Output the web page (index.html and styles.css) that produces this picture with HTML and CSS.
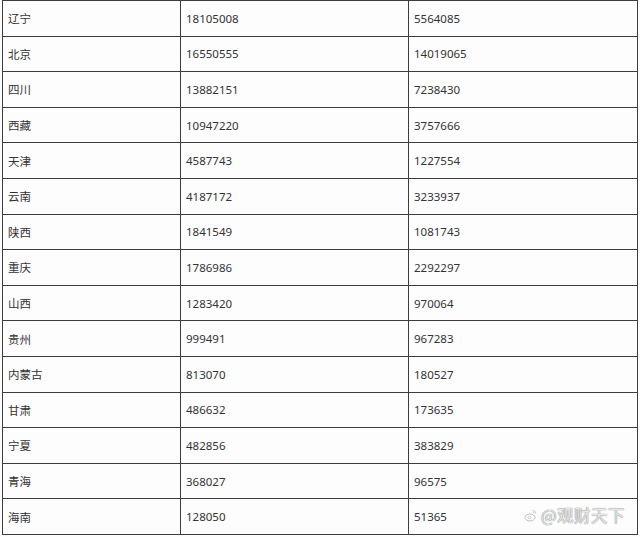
FILE: index.html
```html
<!DOCTYPE html>
<html lang="zh">
<head>
<meta charset="utf-8">
<link rel="stylesheet" href="styles.css">
</head>
<body>
<div class="page">
  <div class="grid">
    <div class="c">辽宁</div><div class="c">18105008</div><div class="c">5564085</div>
    <div class="c">北京</div><div class="c">16550555</div><div class="c">14019065</div>
    <div class="c">四川</div><div class="c">13882151</div><div class="c">7238430</div>
    <div class="c">西藏</div><div class="c">10947220</div><div class="c">3757666</div>
    <div class="c">天津</div><div class="c">4587743</div><div class="c">1227554</div>
    <div class="c">云南</div><div class="c">4187172</div><div class="c">3233937</div>
    <div class="c">陕西</div><div class="c">1841549</div><div class="c">1081743</div>
    <div class="c">重庆</div><div class="c">1786986</div><div class="c">2292297</div>
    <div class="c">山西</div><div class="c">1283420</div><div class="c">970064</div>
    <div class="c">贵州</div><div class="c">999491</div><div class="c">967283</div>
    <div class="c">内蒙古</div><div class="c">813070</div><div class="c">180527</div>
    <div class="c">甘肃</div><div class="c">486632</div><div class="c">173635</div>
    <div class="c">宁夏</div><div class="c">482856</div><div class="c">383829</div>
    <div class="c">青海</div><div class="c">368027</div><div class="c">96575</div>
    <div class="c">海南</div><div class="c">128050</div><div class="c">51365</div>
  </div>
  <div class="wm">
    <svg class="wm-icon" width="13" height="13" viewBox="0 0 13 13">
      <ellipse cx="6" cy="8.5" rx="5" ry="3.5" fill="none" stroke="#c0c0c0" stroke-width="1"/>
      <circle cx="5.5" cy="8.5" r="1.3" fill="none" stroke="#c0c0c0" stroke-width="0.8"/>
      <path d="M8.5 1.5 Q11.5 1.5 11.8 4.5" fill="none" stroke="#c0c0c0" stroke-width="0.9"/>
      <path d="M8.8 3.2 Q10 3.2 10.2 4.5" fill="none" stroke="#c0c0c0" stroke-width="0.8"/>
    </svg>
    <span class="wm-text">@观财天下</span>
  </div>
</div>
</body>
</html>
```
FILE: styles.css
```css
html, body {
  margin: 0;
  padding: 0;
  background: #fdfdfd;
}
.page {
  position: relative;
  width: 640px;
  height: 537px;
  overflow: hidden;
}
.grid {
  margin-left: 2px;
  display: grid;
  grid-template-columns: 178px 228px 229px;
  grid-template-rows: repeat(15, 35.6px);
  border-top: 1px solid #3c3c3c;
  border-left: 1px solid #3c3c3c;
  width: 635px;
  font-family: "Noto Sans", "Noto Sans CJK SC", sans-serif;
  font-size: 11.5px;
  color: #333;
}
.c {
  box-sizing: border-box;
  border-right: 1px solid #3c3c3c;
  border-bottom: 1px solid #3c3c3c;
  display: flex;
  align-items: center;
  padding-left: 5px;
  white-space: nowrap;
}
.wm {
  position: absolute;
  left: 524px;
  top: 503px;
  display: flex;
  align-items: center;
  gap: 4px;
}
.wm-text {
  font-family: "Noto Sans CJK SC", sans-serif;
  font-size: 16.5px;
  color: #e6e6e6;
  letter-spacing: 0.5px;
  text-shadow: 0 0 1px #8a8a8a, 0 0 1px #8a8a8a;
}
```
